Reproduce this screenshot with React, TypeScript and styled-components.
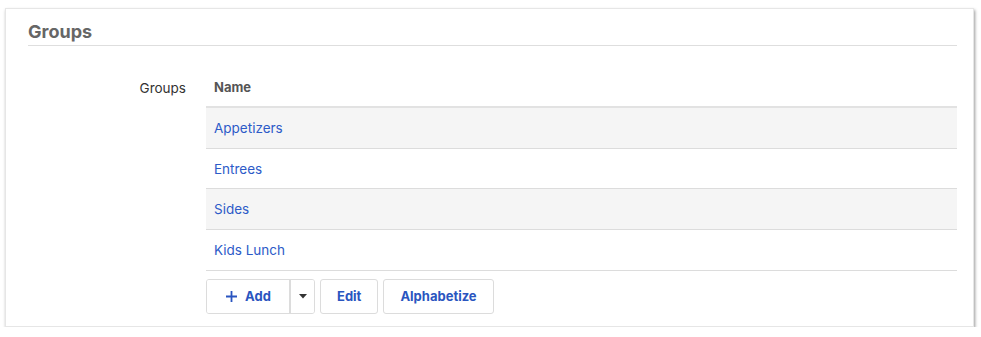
import React from 'react'
import styled, { createGlobalStyle } from 'styled-components'

/*---> Data <---*/
const groups = ['Appetizers', 'Entrees', 'Sides', 'Kids Lunch']

/*---> Component <---*/
const App = () => {
  return (
    <>
      <GlobalStyle />
      <Card>
        <Heading>Groups</Heading>
        <FormRow>
          <Label>Groups</Label>
          <Field>
            <Table>
              <HeaderRow>
                <HeaderCell>Name</HeaderCell>
              </HeaderRow>
              {groups.map((name, i) => (
                <Row key={name} $striped={i % 2 === 0}>
                  <LinkText>{name}</LinkText>
                </Row>
              ))}
            </Table>
            <Actions>
              <SplitButton>
                <MainPart>
                  <svg width="13" height="13" viewBox="0 0 13 13">
                    <path d="M6.5 1v11M1 6.5h11" stroke="#2a55c0" strokeWidth="1.8" />
                  </svg>
                  Add
                </MainPart>
                <CaretPart>
                  <svg width="8" height="5" viewBox="0 0 8 5">
                    <path d="M0 0h8L4 4.5z" fill="#333" />
                  </svg>
                </CaretPart>
              </SplitButton>
              <Button>Edit</Button>
              <Button>Alphabetize</Button>
            </Actions>
          </Field>
        </FormRow>
      </Card>
    </>
  )
}

export default App

/*---> Styles <---*/
const GlobalStyle = createGlobalStyle`
  body {
    margin: 0;
    background: #ffffff;
    font-family: Inter, 'Liberation Sans', sans-serif;
  }
`

const Card = styled.div`
  margin: 8px 0 0 5px;
  width: 969px;
  height: 319px;
  box-sizing: border-box;
  border: 1px solid #e6e6e6;
  background: #fff;
  box-shadow: 1px 2px 3px rgba(0, 0, 0, 0.4);
  padding: 0 16px 0 22px;
`

const Heading = styled.h2`
  margin: 0;
  padding: 12px 0 0;
  height: 37px;
  box-sizing: border-box;
  font-size: 18px;
  line-height: 21px;
  font-weight: 700;
  color: #666;
  border-bottom: 1px solid #dedede;
`

const FormRow = styled.div`
  display: grid;
  grid-template-columns: 158px 1fr;
  column-gap: 20px;
  margin-top: 22px;
`

const Label = styled.div`
  text-align: right;
  font-size: 13.5px;
  line-height: 40px;
  color: #333;
`

const Field = styled.div`
  display: flex;
  flex-direction: column;
`

const Table = styled.div`
  display: flex;
  flex-direction: column;
`

const HeaderRow = styled.div`
  height: 40px;
  box-sizing: border-box;
  border-bottom: 2px solid #e2e2e2;
  display: flex;
  align-items: center;
  padding: 0 8px;
`

const HeaderCell = styled.span`
  font-size: 13px;
  font-weight: 700;
  color: #555;
`

const Row = styled.div<{ $striped: boolean }>`
  height: 40.7px;
  box-sizing: border-box;
  border-bottom: 1px solid #dcdcdc;
  background: ${(p) => (p.$striped ? '#f5f5f5' : '#fff')};
  display: flex;
  align-items: center;
  padding: 0 8px;
`

const LinkText = styled.a`
  font-size: 13.5px;
  color: #2d5bc8;
  cursor: pointer;
`

const Actions = styled.div`
  display: flex;
  gap: 5px;
  margin-top: 8px;
`

const Button = styled.button`
  height: 35px;
  box-sizing: border-box;
  border: 1px solid #dcdcdc;
  border-radius: 3px;
  background: #fff;
  padding: 0 16px;
  font-family: Inter, 'Liberation Sans', sans-serif;
  font-size: 13px;
  font-weight: 700;
  color: #2a55c0;
  display: flex;
  align-items: center;
  gap: 7px;
  cursor: pointer;
`

const SplitButton = styled.div`
  display: flex;
  height: 35px;
  box-sizing: border-box;
  border: 1px solid #dcdcdc;
  border-radius: 3px;
  overflow: hidden;
`

const MainPart = styled(Button)`
  border: none;
  border-right: 2px solid #dcdcdc;
  border-radius: 0;
  height: 100%;
  width: 84px;
  justify-content: center;
  padding: 0;
`

const CaretPart = styled.button`
  border: none;
  background: #fff;
  width: 23px;
  display: flex;
  align-items: center;
  justify-content: center;
  padding: 0;
  cursor: pointer;
`
